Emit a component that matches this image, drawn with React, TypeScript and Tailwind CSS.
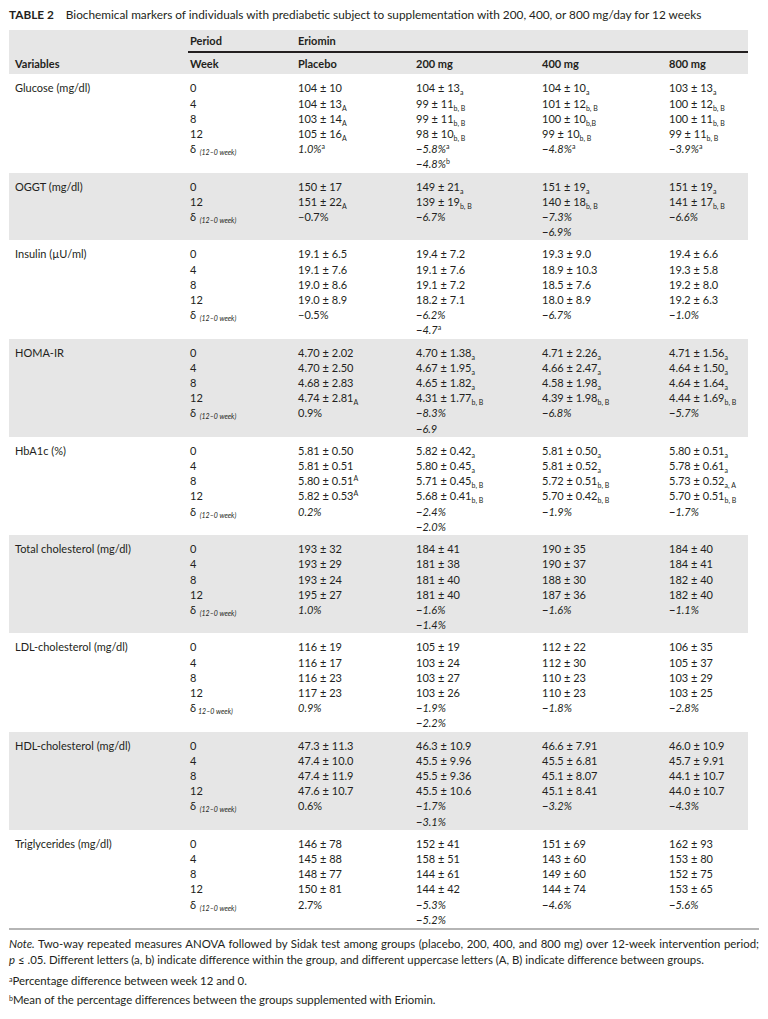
import React from 'react';

type Section = {
  name: string;
  weeks: string[];
  cols: string[][];
  shade?: boolean;
  ldl?: boolean;
};

const W5 = ['0', '4', '8', '12', 'δ'];

// "*" = italic, "_x" = subscript, "^x" = superscript
const sections: Section[] = [
  {
    name: 'Glucose (mg/dl)',
    weeks: W5,
    cols: [
      ['104 ± 10', '104 ± 13_A', '103 ± 14_A', '105 ± 16_A', '*1.0%^a'],
      ['104 ± 13_a', '99 ± 11_b, B', '99 ± 11_b, B', '98 ± 10_b, B', '*−5.8%^a', '*−4.8%^b'],
      ['104 ± 10_a', '101 ± 12_b, B', '100 ± 10_b,B', '99 ± 10_b, B', '*−4.8%^a'],
      ['103 ± 13_a', '100 ± 12_b, B', '100 ± 11_b, B', '99 ± 11_b, B', '*−3.9%^a'],
    ],
  },
  {
    name: 'OGGT (mg/dl)',
    weeks: ['0', '12', 'δ'],
    shade: true,
    cols: [
      ['150 ± 17', '151 ± 22_A', '−0.7%'],
      ['149 ± 21_a', '139 ± 19_b, B', '*−6.7%'],
      ['151 ± 19_a', '140 ± 18_b, B', '*−7.3%', '*−6.9%'],
      ['151 ± 19_a', '141 ± 17_b, B', '*−6.6%'],
    ],
  },
  {
    name: 'Insulin (µU/ml)',
    weeks: W5,
    cols: [
      ['19.1 ± 6.5', '19.1 ± 7.6', '19.0 ± 8.6', '19.0 ± 8.9', '−0.5%'],
      ['19.4 ± 7.2', '19.1 ± 7.6', '19.1 ± 7.2', '18.2 ± 7.1', '*−6.2%', '*−4.7^a'],
      ['19.3 ± 9.0', '18.9 ± 10.3', '18.5 ± 7.6', '18.0 ± 8.9', '*−6.7%'],
      ['19.4 ± 6.6', '19.3 ± 5.8', '19.2 ± 8.0', '19.2 ± 6.3', '*−1.0%'],
    ],
  },
  {
    name: 'HOMA-IR',
    weeks: W5,
    shade: true,
    cols: [
      ['4.70 ± 2.02', '4.70 ± 2.50', '4.68 ± 2.83', '4.74 ± 2.81_A', '0.9%'],
      ['4.70 ± 1.38_a', '4.67 ± 1.95_a', '4.65 ± 1.82_a', '4.31 ± 1.77_b, B', '*−8.3%', '*−6.9'],
      ['4.71 ± 2.26_a', '4.66 ± 2.47_a', '4.58 ± 1.98_a', '4.39 ± 1.98_b, B', '*−6.8%'],
      ['4.71 ± 1.56_a', '4.64 ± 1.50_a', '4.64 ± 1.64_a', '4.44 ± 1.69_b, B', '*−5.7%'],
    ],
  },
  {
    name: 'HbA1c (%)',
    weeks: W5,
    cols: [
      ['5.81 ± 0.50', '5.81 ± 0.51', '5.80 ± 0.51^A', '5.82 ± 0.53^A', '*0.2%'],
      ['5.82 ± 0.42_a', '5.80 ± 0.45_a', '5.71 ± 0.45_b, B', '5.68 ± 0.41_b, B', '*−2.4%', '*−2.0%'],
      ['5.81 ± 0.50_a', '5.81 ± 0.52_a', '5.72 ± 0.51_b, B', '5.70 ± 0.42_b, B', '*−1.9%'],
      ['5.80 ± 0.51_a', '5.78 ± 0.61_a', '5.73 ± 0.52_a, A', '5.70 ± 0.51_b, B', '*−1.7%'],
    ],
  },
  {
    name: 'Total cholesterol (mg/dl)',
    weeks: W5,
    shade: true,
    cols: [
      ['193 ± 32', '193 ± 29', '193 ± 24', '195 ± 27', '*1.0%'],
      ['184 ± 41', '181 ± 38', '181 ± 40', '181 ± 40', '*−1.6%', '*−1.4%'],
      ['190 ± 35', '190 ± 37', '188 ± 30', '187 ± 36', '*−1.6%'],
      ['184 ± 40', '184 ± 41', '182 ± 40', '182 ± 40', '*−1.1%'],
    ],
  },
  {
    name: 'LDL-cholesterol (mg/dl)',
    weeks: W5,
    ldl: true,
    cols: [
      ['116 ± 19', '116 ± 17', '116 ± 23', '117 ± 23', '*0.9%'],
      ['105 ± 19', '103 ± 24', '103 ± 27', '103 ± 26', '*−1.9%', '*−2.2%'],
      ['112 ± 22', '112 ± 30', '110 ± 23', '110 ± 23', '*−1.8%'],
      ['106 ± 35', '105 ± 37', '103 ± 29', '103 ± 25', '*−2.8%'],
    ],
  },
  {
    name: 'HDL-cholesterol (mg/dl)',
    weeks: W5,
    shade: true,
    cols: [
      ['47.3 ± 11.3', '47.4 ± 10.0', '47.4 ± 11.9', '47.6 ± 10.7', '0.6%'],
      ['46.3 ± 10.9', '45.5 ± 9.96', '45.5 ± 9.36', '45.5 ± 10.6', '*−1.7%', '*−3.1%'],
      ['46.6 ± 7.91', '45.5 ± 6.81', '45.1 ± 8.07', '45.1 ± 8.41', '*−3.2%'],
      ['46.0 ± 10.9', '45.7 ± 9.91', '44.1 ± 10.7', '44.0 ± 10.7', '*−4.3%'],
    ],
  },
  {
    name: 'Triglycerides (mg/dl)',
    weeks: W5,
    cols: [
      ['146 ± 78', '145 ± 88', '148 ± 77', '150 ± 81', '2.7%'],
      ['152 ± 41', '158 ± 51', '144 ± 61', '144 ± 42', '*−5.3%', '*−5.2%'],
      ['151 ± 69', '143 ± 60', '149 ± 60', '144 ± 74', '*−4.6%'],
      ['162 ± 93', '153 ± 80', '152 ± 75', '153 ± 65', '*−5.6%'],
    ],
  },
];

const grid = 'grid grid-cols-[181px_108px_118px_126px_127px_1fr]';

function Value({ raw }: { raw: string }) {
  const italic = raw.startsWith('*');
  let s = italic ? raw.slice(1) : raw;
  let sub = '';
  let sup = '';
  if (s.includes('_')) {
    [s, sub] = s.split('_');
  } else if (s.includes('^')) {
    [s, sup] = s.split('^');
  }
  return (
    <div className={italic ? 'italic whitespace-nowrap' : 'whitespace-nowrap'}>
      {s}
      {sub && <span className="relative top-[3px] text-[7px] not-italic leading-none">{sub}</span>}
      {sup && <span className="relative -top-[4px] text-[7px] not-italic leading-none">{sup}</span>}
    </div>
  );
}

function Week({ w, ldl }: { w: string; ldl?: boolean }) {
  if (w !== 'δ') return <div>{w}</div>;
  return (
    <div className="whitespace-nowrap">
      δ
      <span className="relative top-[2px] ml-[2px] text-[7px] italic leading-none">
        {ldl ? '12–0 week)' : ' (12–0 week)'}
      </span>
    </div>
  );
}

function Block({ s }: { s: Section }) {
  return (
    <div className={`${grid} pt-[6px] pb-[1px] ${s.shade ? 'bg-[#e6e6e6]' : ''}`}>
      <div className="pl-[6px]">{s.name}</div>
      <div>
        {s.weeks.map((w, i) => (
          <Week key={i} w={w} ldl={s.ldl} />
        ))}
      </div>
      {s.cols.map((col, ci) => (
        <div key={ci}>
          {col.map((raw, i) => (
            <Value key={i} raw={raw} />
          ))}
        </div>
      ))}
    </div>
  );
}

export default function App() {
  return (
    <div className="w-[768px] min-h-[1019px] bg-white px-[9px] pt-[7px] font-[Lato,sans-serif] text-[#231f20]">
      <div className="text-[11.8px] leading-[16px] whitespace-nowrap">
        <span className="font-bold">TABLE 2</span>
        <span className="ml-[12px]">
          Biochemical markers of individuals with prediabetic subject to supplementation with 200, 400, or 800
          mg/day for 12 weeks
        </span>
      </div>

      <div className="w-[739px] mt-[7px] text-[11px] leading-[15.2px]">
        <div className="bg-[#e6e6e6] pt-[3px] pb-[3px] font-bold">
          <div className={grid}>
            <div />
            <div>Period</div>
            <div className="col-span-4">Eriomin</div>
          </div>
          <div className={grid}>
            <div />
            <div className="col-span-5 ml-[-2px] my-[3px] h-[2px] bg-[#231f20]" />
          </div>
          <div className={grid}>
            <div className="pl-[6px]">Variables</div>
            <div>Week</div>
            <div>Placebo</div>
            <div>200 mg</div>
            <div>400 mg</div>
            <div>800 mg</div>
          </div>
        </div>

        {sections.map((s) => (
          <Block key={s.name} s={s} />
        ))}
      </div>
      <div className="w-[750px] h-[2px] bg-[#b5b5b5]" />

      <div className="w-[750px] mt-[6px] text-[11.4px] leading-[16px]">
        <p className="whitespace-nowrap text-justify [text-align-last:justify]">
          <span className="italic">Note.</span> Two-way repeated measures ANOVA followed by Sidak test among groups
          (placebo, 200, 400, and 800 mg) over 12-week intervention period;
        </p>
        <p className="whitespace-nowrap">
          <span className="italic">p</span> ≤ .05. Different letters (a, b) indicate difference within the group, and
          different uppercase letters (A, B) indicate difference between groups.
        </p>
        <p className="mt-[5px]">
          <span className="relative -top-[3px] text-[7px] leading-none">a</span>Percentage difference between week 12
          and 0.
        </p>
        <p className="mt-[3px]">
          <span className="relative -top-[3px] text-[7px] leading-none">b</span>Mean of the percentage differences
          between the groups supplemented with Eriomin.
        </p>
      </div>
    </div>
  );
}
